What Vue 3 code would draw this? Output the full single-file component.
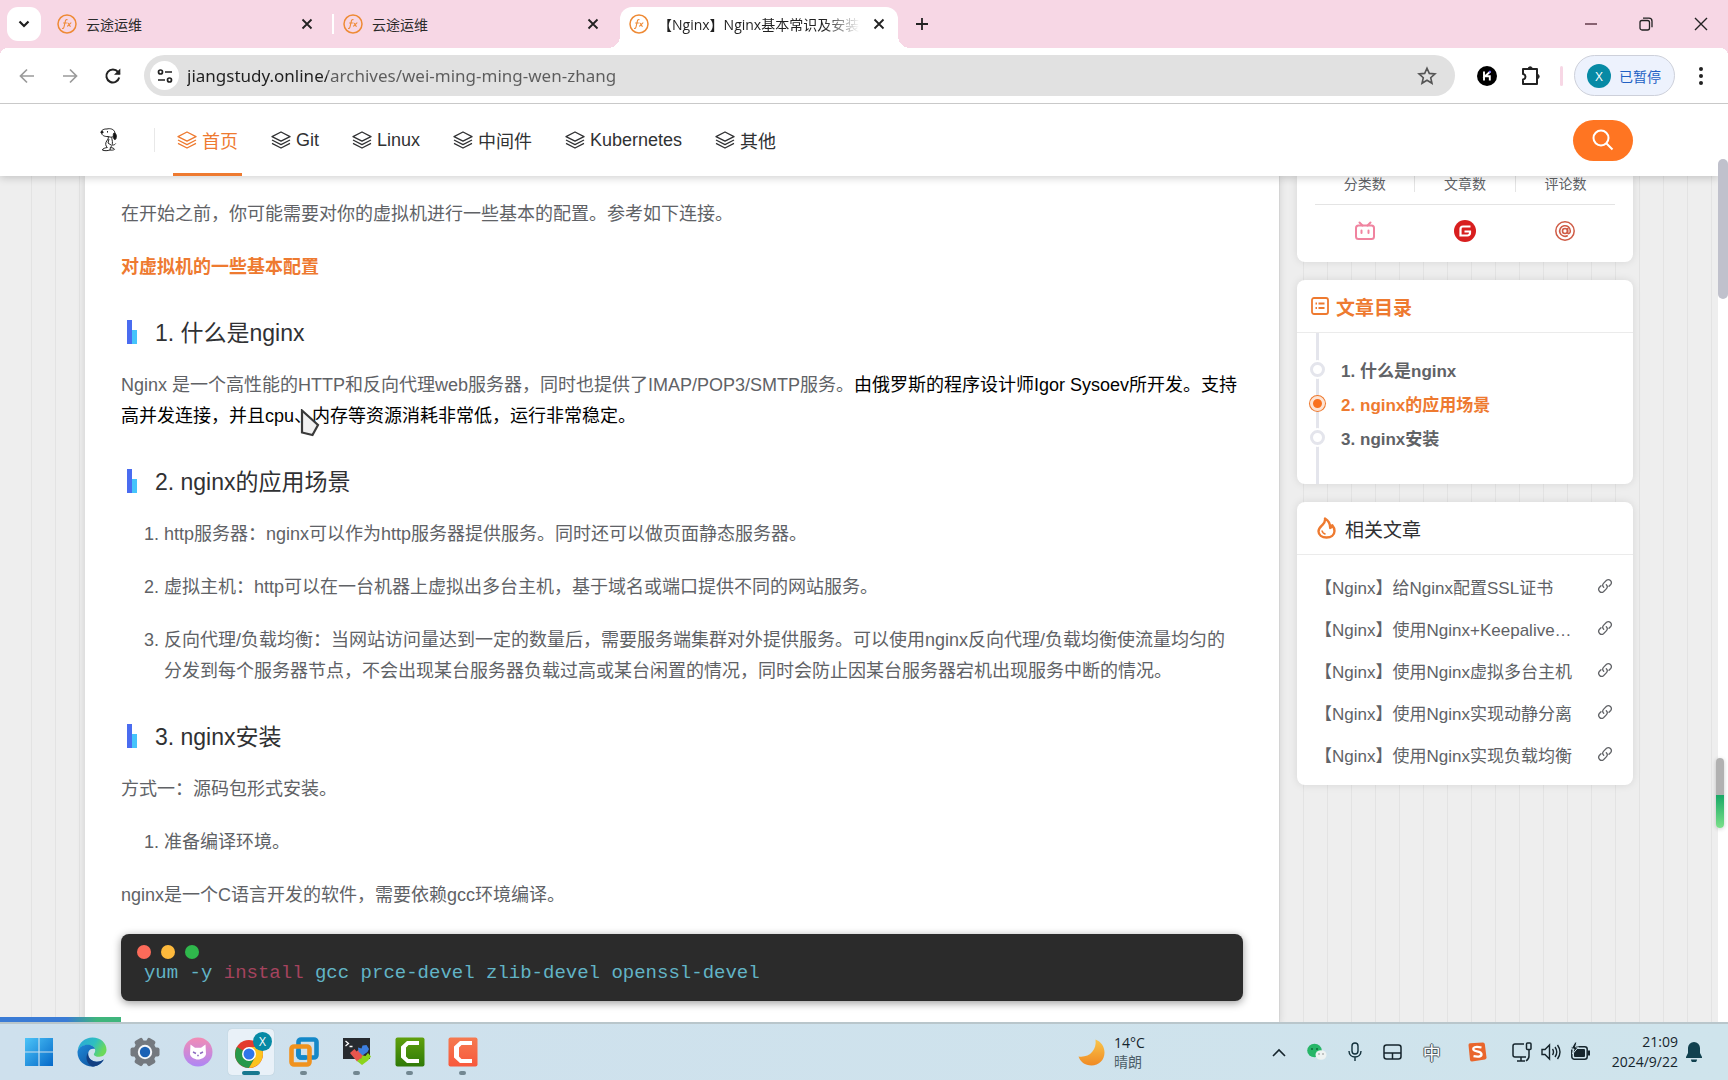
<template>
  <div class="screen">
    <!-- 标签栏 -->
    <div class="tabbar">
      <button class="tab-search" aria-label="搜索标签页">
        <svg width="12" height="8" viewBox="0 0 12 8"><path d="M1.5 1.5 6 6l4.500-4.500" fill="none" stroke="#1f1f1f" stroke-width="2.200" /></svg>
      </button>
      <div v-for="(t, i) in tabs" :key="i" :class="['tab', { active: t.active }]">
        <svg class="favicon" width="20" height="20" viewBox="0 0 20 20" fill="none" stroke="#ee8a35">
          <circle cx="10" cy="10" r="9" stroke-width="1.500" />
          <path d="M10.500 5.800c-1.500-.6-2 .4-2.300 2L7 13c-.3 1.300-.9 1.700-1.900 1.300M6.200 9h3.600M10.500 9c1.600-.4 1.300 3.600 3.400 3.300M14.300 8.900c-1.300-.2-2.500 3.300-4.300 3.400" stroke-width="1.100" />
        </svg>
        <span class="tab-title">{{ t.title }}</span>
        <button class="tab-close" aria-label="关闭">
          <svg width="12" height="12" viewBox="0 0 12 12"><path d="M1.500 1.500l9 9M10.500 1.500l-9 9" stroke="#222" stroke-width="1.800" /></svg>
        </button>
      </div>
      <button class="tab-new" aria-label="新标签页">
        <svg width="14" height="14" viewBox="0 0 14 14"><path d="M7 1v12M1 7h12" stroke="#222" stroke-width="1.800" /></svg>
      </button>
      <div class="win-controls">
        <button aria-label="最小化"><svg width="14" height="14" viewBox="0 0 14 14"><path d="M1 7h12" stroke="#6b4454" stroke-width="1.600" /></svg></button>
        <button aria-label="还原">
          <svg width="14" height="14" viewBox="0 0 14 14" fill="none" stroke="#222" stroke-width="1.300"><rect x="1" y="3.500" width="9.500" height="9.500" rx="2" /><path d="M4 1.200h6a3 3 0 0 1 3 3v6" /></svg>
        </button>
        <button aria-label="关闭窗口"><svg width="14" height="14" viewBox="0 0 14 14"><path d="M1 1l12 12M13 1L1 13" stroke="#222" stroke-width="1.400" /></svg></button>
      </div>
    </div>

    <!-- 地址栏 -->
    <div class="toolbar">
      <button class="tool" aria-label="后退"><svg width="16" height="16" viewBox="0 0 16 16" fill="none" stroke="#9a9a9a" stroke-width="1.700"><path d="M15 8H2M8 1.500 1.500 8 8 14.500" /></svg></button>
      <button class="tool" aria-label="前进"><svg width="16" height="16" viewBox="0 0 16 16" fill="none" stroke="#9a9a9a" stroke-width="1.700"><path d="M1 8h13M8 1.500 14.500 8 8 14.500" /></svg></button>
      <button class="tool" aria-label="刷新">
        <svg width="18" height="18" viewBox="0 0 18 18"><path d="M15.200 10.500A6.500 6.500 0 1 1 14 4.900L15.500 7" fill="none" stroke="#222" stroke-width="2" /><path d="M16.300 1.500v6.300H10z" fill="#222" /></svg>
      </button>
      <div class="omnibox">
        <button class="site-info" aria-label="网站信息">
          <svg width="16" height="16" viewBox="0 0 16 16" fill="none" stroke="#222" stroke-width="1.700"><circle cx="3.500" cy="4" r="2" /><path d="M8 4h7M1 12h7" /><circle cx="12.500" cy="12" r="2" /></svg>
        </button>
        <input v-model="url" class="url" aria-label="地址" spellcheck="false" />
        <button class="star" aria-label="收藏">
          <svg width="20" height="20" viewBox="0 0 20 20"><path d="M10 2.200l2.300 5.200 5.700.5-4.300 3.800 1.300 5.600-5-3-5 3 1.300-5.600L2 7.900l5.700-.5z" fill="none" stroke="#555" stroke-width="1.600" /></svg>
        </button>
      </div>
      <button class="ext" aria-label="扩展 K">
        <svg width="20" height="20" viewBox="0 0 20 20"><circle cx="10" cy="10" r="10" fill="#000" /><path d="M7 5.500v9M13.300 5.500 8 10.200h4.800v4.300" fill="none" stroke="#fff" stroke-width="1.900" /><path d="M12.300 6.400l1.300-1.200" stroke="#6a5cff" stroke-width="1.800" /></svg>
      </button>
      <button class="ext" aria-label="扩展程序">
        <svg width="22" height="22" viewBox="0 0 22 22" fill="none" stroke="#222" stroke-width="2"><path d="M3 14.500V19h14V4H3v5c3.300.4 3.300 5.100 0 5.500z" stroke-linejoin="round" /><path d="M8 4a2.200 2.200 0 0 1 4.400 0M17 9.300a2.200 2.200 0 0 1 0 4.400" fill="#222" stroke-width="1" /></svg>
      </button>
      <span class="tool-sep"></span>
      <button class="profile"><span class="avatar">X</span>已暂停</button>
      <button class="more" aria-label="更多"><svg width="4" height="18" viewBox="0 0 4 18" fill="#222"><circle cx="2" cy="2" r="2" /><circle cx="2" cy="9" r="2" /><circle cx="2" cy="16" r="2" /></svg></button>
    </div>

    <!-- 网页 -->
    <div class="page">
      <header class="site-header">
        <div class="wrap header-inner">
          <a href="#" class="logo" aria-label="云途运维">
            <svg width="18" height="24" viewBox="0 0 18 24" fill="none" stroke="#222" stroke-width="1">
              <path d="M1.500 4.500C1 2 4 .8 7 1c3-1 7 .2 7.800 3.200.4 2-.4 3.800-2.300 4.600-1.500.8-3.200 0-4.500-.3C5 8.800 1.500 7.500 1.500 4.500z" />
              <path d="M13.500 5.500c1-1.200 2.700 0 2.800 2.500.1 2-.4 3.700-1.500 3.600-1.300 0-1.800-4.400-1.300-6.100z" fill="#111" />
              <ellipse cx="2" cy="4.200" rx="1.200" ry=".9" fill="#111" />
              <path d="M7.500 3v1.600M8.300 9c.3 1.500-.6 2.600-1.600 4-1.500 2-1.300 5 .6 6.500M11.800 9.200c-.2 2 .8 3.300.6 6-.2 2-1 3.400-2 4.300M7.300 19.500c-2 .3-4.500 1-5 2.500 2 1 5.500.8 7.700 0l.4-2.500M9 11l-1 4 3 2M12.400 17c1.500.2 2.700-.5 3.300-1.500M10 22c1.500.3 3.500.2 4.500-.6-.5-1.200-2-1.600-4-1.900" />
            </svg>
          </a>
          <nav class="nav">
            <a v-for="(n, i) in navs" :key="n" href="#" :class="['nav-item', { active: i === 0 }]">
              <svg width="20" height="18" viewBox="0 0 20 18" fill="none" stroke="currentColor" stroke-width="1.300" stroke-linejoin="round">
                <path d="M10 1l9 4.600-9 4.600-9-4.600zM1 9l9 4.600L19 9M1 12.400 10 17l9-4.600" />
              </svg>
              {{ n }}
            </a>
          </nav>
          <button class="search" aria-label="搜索">
            <svg width="22" height="22" viewBox="0 0 22 22" fill="none" stroke="#fff" stroke-width="2"><circle cx="9" cy="9" r="7.500" /><path d="M14.500 14.500l6 6" /></svg>
          </button>
        </div>
      </header>

      <div class="body">
        <div class="wrap columns">
          <article class="article">
            <p>在开始之前，你可能需要对你的虚拟机进行一些基本的配置。参考如下连接。</p>
            <p><a href="#" class="link">对虚拟机的一些基本配置</a></p>
            <h2>1. 什么是nginx</h2>
            <p>Nginx 是一个高性能的HTTP和反向代理web服务器，同时也提供了IMAP/POP3/SMTP服务。<span class="dark">由俄罗斯的程序设计师Igor Sysoev所开发。支持高并发连接，并且cpu、内存等资源消耗非常低，运行非常稳定。</span></p>
            <h2>2. nginx的应用场景</h2>
            <ol>
              <li v-for="s in scenes" :key="s">{{ s }}</li>
            </ol>
            <h2>3. nginx安装</h2>
            <p>方式一：源码包形式安装。</p>
            <ol>
              <li>准备编译环境。</li>
            </ol>
            <p>nginx是一个C语言开发的软件，需要依赖gcc环境编译。</p>
            <div class="code">
              <div class="lights"><i class="red"></i><i class="yellow"></i><i class="green"></i></div>
              <pre><code>yum -y <span class="kw">install</span> gcc prce-devel zlib-devel openssl-devel</code></pre>
            </div>
          </article>

          <aside class="side">
            <section class="card stats">
              <div class="stat-row">
                <span>分类数</span>
                <span>文章数</span>
                <span>评论数</span>
              </div>
              <div class="social">
                <a href="#" aria-label="哔哩哔哩">
                  <svg width="20" height="20" viewBox="0 0 20 20" fill="none" stroke="#f0839f" stroke-width="2" stroke-linecap="round"><rect x="1" y="4.500" width="18" height="13.500" rx="2.500" /><path d="M4.500 1.500l3 3M15.500 1.500l-3 3M6.500 9.500v2.500M13.500 9.500v2.500" /></svg>
                </a>
                <a href="#" aria-label="Gitee">
                  <svg width="22" height="22" viewBox="0 0 22 22"><circle cx="11" cy="11" r="11" fill="#d81e1e" /><path d="M16.500 6.500H9A2.500 2.500 0 0 0 6.500 9v6.500h7a2.500 2.500 0 0 0 2.500-2.500v-1.500h-5.500" fill="none" stroke="#fff" stroke-width="2.200" /></svg>
                </a>
                <a href="#" aria-label="邮箱">
                  <svg width="20" height="20" viewBox="0 0 20 20" fill="none" stroke="#cf5b45"><circle cx="10" cy="10" r="9.200" stroke-width="1.500" /><circle cx="10" cy="10" r="2.500" stroke-width="1.600" /><path d="M12.600 7v4.300c0 2 2.700 1.700 2.700-1.300a5.300 5.300 0 1 0-2.500 4.500" stroke-width="1.600" /></svg>
                </a>
              </div>
            </section>

            <section class="card toc">
              <div class="card-head toc-head">
                <svg width="18" height="18" viewBox="0 0 18 18" fill="none" stroke="#ee7a30" stroke-width="1.800"><rect x="1" y="1" width="16" height="16" rx="2" /><path d="M4.500 6.500h1.500M7.500 6.500h6M4.500 11h1.500M7.500 11h6" /></svg>
                文章目录
              </div>
              <ul class="toc-list">
                <li v-for="(t, i) in toc" :key="t" :class="{ active: i === 1 }"><span class="dot"></span><a href="#">{{ t }}</a></li>
              </ul>
            </section>

            <section class="card related">
              <div class="card-head related-head">
                <svg width="19" height="22" viewBox="0 0 19 22" fill="none" stroke="#ee7a30" stroke-width="2.400" stroke-linejoin="round">
                  <path d="M8 1.500c.6 3-.8 4.600-2.500 6.300C3.400 9.900 1.500 11.500 1.500 14.200c0 3.800 3.500 6.300 8 6.300s8-2.500 8-6.500c0-2-.8-4.200-2.200-5.800-.2 1.200-.9 2.300-2.100 2.800C13.200 7 11.500 3.500 8 1.500z" />
                  <path d="M5 13.500c.3 2 1.700 3.200 3.500 3.600" stroke-width="1.600" />
                </svg>
                相关文章
              </div>
              <ul class="related-list">
                <li v-for="r in related" :key="r">
                  <a href="#">{{ r }}</a>
                  <svg width="16" height="16" viewBox="0 0 16 16" fill="none" stroke="#606266" stroke-width="1.300" stroke-linecap="round">
                    <path d="M6.700 9.300a3 3 0 0 1 0-4.200L9.500 2.300a3 3 0 0 1 4.200 4.200L12 8.200M9.300 6.700a3 3 0 0 1 0 4.200l-2.800 2.800a3 3 0 0 1-4.200-4.200L4 7.800" />
                  </svg>
                </li>
              </ul>
            </section>
          </aside>
        </div>
      </div>

      <div class="read-progress"></div>
      <div class="scrollbar"><div class="thumb"></div></div>
      <div class="level"></div>
    </div>

    <!-- 任务栏 -->
    <div class="taskbar">
      <div class="apps">
        <button class="app" aria-label="开始">
          <svg width="28" height="28" viewBox="0 0 28 28"><defs><linearGradient id="win" x1="0" y1="0" x2="1" y2="1"><stop offset="0" stop-color="#4cc4f8" /><stop offset="1" stop-color="#0568c8" /></linearGradient></defs><path d="M0 0h13.400v13.400H0zM14.600 0H28v13.400H14.600zM0 14.600h13.400V28H0zM14.600 14.600H28V28H14.600z" fill="url(#win)" /></svg>
        </button>
        <button class="app" aria-label="Edge">
          <svg width="30" height="30" viewBox="0 0 30 30">
            <defs>
              <linearGradient id="e1" x1="0" y1="0" x2="1" y2=".4"><stop offset="0" stop-color="#2aa6dc" /><stop offset=".6" stop-color="#2fbfc0" /><stop offset="1" stop-color="#6bd95a" /></linearGradient>
              <linearGradient id="e2" x1="0" y1="0" x2="1" y2="1"><stop offset="0" stop-color="#1e88d8" /><stop offset="1" stop-color="#0c4a94" /></linearGradient>
            </defs>
            <path d="M.8 13C2 5.500 8 .5 15.500.5 23.500.5 29.500 6 29.500 12.800c0 4.200-3.200 7-7.200 7-3.600 0-5.500-1.300-5.500-2.400 0-.9 1.400-1.400 1.400-3.800 0-3-2.800-5.600-7-5.600C6.500 8 2.700 10 .8 13z" fill="url(#e1)" />
            <path d="M.6 14C2 10.200 6 7.800 10.600 7.800c3.800 0 6.700 1.900 7.500 4.300-2-.9-5.800-.6-6.800 3.400-1.200 5 3.500 9.500 8.700 9.200 3.300-.2 5.200-1.500 6.800-2.300C24.600 26.800 20 29.500 15 29.500 7.500 29.500-.4 23.500.6 14z" fill="url(#e2)" />
            <path d="M11.300 15.500c-3 3.500-2.500 10.500 3.700 14 5-.1 9.300-2.900 11.800-7.100-1.600.8-3.500 2.100-6.800 2.300-5.200.3-9.900-4.200-8.700-9.200z" fill="#123f82" />
          </svg>
        </button>
        <button class="app" aria-label="设置">
          <svg width="30" height="30" viewBox="0 0 30 30"><g fill="#74797f"><circle cx="15" cy="15" r="11.500" /><rect v-for="a in 6" :key="a" x="10.500" y=".5" width="9" height="8" rx="2" :transform="`rotate(${a * 60 + 30} 15 15)`" /></g><circle cx="15" cy="15" r="7.200" fill="#f4f7fa" /><circle cx="15" cy="15" r="5.200" fill="#1b62b5" /></svg>
        </button>
        <button class="app" aria-label="Clash">
          <svg width="30" height="30" viewBox="0 0 30 30"><defs><linearGradient id="cat" x1="0" y1="0" x2="0" y2="1"><stop offset="0" stop-color="#f28cb4" /><stop offset="1" stop-color="#ae86f5" /></linearGradient></defs><circle cx="15" cy="15" r="14.500" fill="url(#cat)" /><path d="M7.500 7.500l4.500 3.300h6l4.500-3.300.5 9.500c-.3 3-4.500 5.500-8 5.500S7.300 20 7 17z" fill="#fff" /><path d="M10 15l3 1.500M20 15l-3 1.500M14.200 18.500h1.600" stroke="#8d6cc0" stroke-width="1.400" /></svg>
        </button>
        <button class="app current" aria-label="Chrome">
          <svg width="34" height="36" viewBox="0 0 34 36">
            <circle cx="15" cy="21" r="14" fill="#e33b2e" />
            <path d="M15 21 2.900 14A14 14 0 0 0 15 35l6.100-10.500z" fill="#27994a" />
            <path d="M15 21l6.100 3.500L15 35a14 14 0 0 0 12.100-21H15z" fill="#fcc31e" />
            <circle cx="15" cy="21" r="7" fill="#fff" /><circle cx="15" cy="21" r="5.500" fill="#2f76ea" />
          </svg>
          <span class="badge">X</span>
        </button>
        <button class="app open" aria-label="VMware">
          <svg width="30" height="30" viewBox="0 0 30 30" fill="none" stroke-width="4.600"><rect x="9.500" y="2.500" width="18" height="18" rx="2.500" stroke="#1488c8" /><rect x="2.500" y="9.500" width="18" height="18" rx="2.500" stroke="#f0921e" /><path d="M9.500 13v5a2.500 2.500 0 0 0 2.500 2.500h5" stroke="#1488c8" /></svg>
        </button>
        <button class="app open" aria-label="MobaXterm">
          <svg width="30" height="30" viewBox="0 0 30 30"><rect x="1" y="1" width="27" height="21" fill="#272b30" /><path d="M3.500 4l3 2.500-3 2.500M7.500 9.500h3" fill="none" stroke="#fff" stroke-width="1.300" /><path d="M8 16l4.500-4 2 2.500 2.500-2 5 7-7 5z" fill="#e8564e" /><path d="M16 10.500l3.500 1 1-3 4-.5 2.500 4-1.500 3-5 3.500-4-4z" fill="#3d7fe0" /><path d="M15 24l4.500-3 1-2.500 3 .5 2.500-3 3 3.500-3 4-6 4.500z" fill="#8bd41c" /></svg>
        </button>
        <button v-for="c in camtasia" :key="c.id" class="app open" :aria-label="c.name">
          <svg width="30" height="30" viewBox="0 0 30 30"><defs><linearGradient :id="c.id" x1="0" y1="0" x2="0" y2="1"><stop offset="0" :stop-color="c.from" /><stop offset="1" :stop-color="c.to" /></linearGradient></defs><rect x=".5" y=".5" width="29" height="29" rx="2" :fill="`url(#${c.id})`" /><path d="M24 4v4H13.500l-2.500 2.500v9l2.500 2.500H24v4H12l-6-5.500v-11L12 4z" fill="#fff" /></svg>
        </button>
      </div>

      <div class="weather">
        <svg width="27" height="27" viewBox="0 0 27 27"><defs><linearGradient id="moon" x1="0" y1="0" x2="0" y2="1"><stop offset="0" stop-color="#f9c54a" /><stop offset="1" stop-color="#f08a24" /></linearGradient></defs><path d="M17.500.5C23 2.500 26.500 7.500 26.500 13.500c0 7.500-5.500 13-13 13-6.500 0-11.500-4-13-9C11 19 19 11.500 17.500.5z" fill="url(#moon)" /></svg>
        <div class="weather-text">14°C<span>晴朗</span></div>
      </div>

      <div class="tray">
        <button aria-label="显示隐藏的图标"><svg width="14" height="9" viewBox="0 0 14 9"><path d="M1 8l6-6 6 6" fill="none" stroke="#16252c" stroke-width="1.600" /></svg></button>
        <button aria-label="微信">
          <svg width="20" height="18" viewBox="0 0 20 18"><ellipse cx="7.500" cy="7.500" rx="7.300" ry="6.800" fill="#27b668" /><circle cx="5" cy="6" r="1" fill="#10683a" /><circle cx="10" cy="6" r="1" fill="#10683a" /><ellipse cx="14" cy="12" rx="5.500" ry="4.800" fill="#eef3f2" /><circle cx="12" cy="11" r=".8" fill="#888" /><circle cx="16" cy="11" r=".8" fill="#888" /></svg>
        </button>
        <button aria-label="麦克风"><svg width="14" height="20" viewBox="0 0 14 20" fill="none" stroke="#12303b" stroke-width="1.400"><rect x="4" y="1" width="6" height="11" rx="3" /><path d="M1 9c0 8 12 8 12 0M7 15v4" /></svg></button>
        <button aria-label="触摸板"><svg width="19" height="16" viewBox="0 0 19 16" fill="none" stroke="#16252c" stroke-width="1.500"><rect x="1" y="1" width="17" height="14" rx="2.500" /><path d="M1 9h17M9.500 9v6" /></svg></button>
        <button class="ime">中</button>
        <button class="sogou" aria-label="搜狗输入法">
          <svg width="20" height="20" viewBox="0 0 20 20"><path d="M1.500 3Q1.500 1.500 3 1.300L16 .5Q17.500.5 17.800 2L19.500 15.500Q19.500 17 18 17.500L5 19.500Q3.500 19.500 3 18z" fill="#e9662c" /><path d="M14.500 5.500C8 4 5.500 5.500 6.500 7.800 7.500 10 14 8.500 14.500 12c.3 3-4 3-8 2.200" fill="none" stroke="#fff" stroke-width="2.300" /></svg>
        </button>
        <button class="system" aria-label="网络、音量、电池">
          <svg width="20" height="20" viewBox="0 0 20 20" fill="none" stroke="#16252c" stroke-width="1.500"><path d="M12 2H3a2 2 0 0 0-2 2v9a2 2 0 0 0 2 2h11M9 15v4M5 19h8M17 8v6q0 3-3 5" /><rect x="14.500" y="1" width="4.500" height="6.500" rx="1" /></svg>
          <svg width="20" height="18" viewBox="0 0 20 18" fill="none" stroke="#16252c" stroke-width="1.400"><path d="M1 6.500h3L8.500 2v14L4 11.500H1zM11.500 6q2 3 0 6M14 4q3.500 5 0 10M16.500 2q5 7 0 14" /></svg>
          <svg width="21" height="20" viewBox="0 0 21 20"><rect x="1.800" y="4.800" width="15.400" height="12.400" rx="2.500" fill="none" stroke="#16252c" stroke-width="1.500" /><rect x="4" y="7" width="11" height="8" rx="1" fill="#16252c" /><path d="M18 8.500h2v5h-2z" fill="#16252c" /><path d="M5 0 1 7h3L2.500 12 8.500 5H5.500L7 0z" fill="#16252c" stroke="#cfe4ec" stroke-width="1" /></svg>
        </button>
        <div class="clock">21:09<span>2024/9/22</span></div>
        <button aria-label="通知"><svg width="16" height="20" viewBox="0 0 16 20" fill="#11414f"><path d="M8 0a6 6 0 0 1 6 6v5l2 4v1H0v-1l2-4V6a6 6 0 0 1 6-6zM5 17.500h6a3 3 0 0 1-6 0z" /></svg></button>
      </div>
    </div>

    <svg class="cursor" width="20" height="28" viewBox="0 0 20 28"><path d="M2 1.500 18 16l-5.500 10L2 23.500z" fill="#f1f1f1" stroke="#3a3a3a" stroke-width="2.200" /></svg>
  </div>
</template>

<script setup>
import { ref } from 'vue'

const tabs = [
  { title: '云途运维' },
  { title: '云途运维' },
  { title: '【Nginx】Nginx基本常识及安装', active: true },
]
const url = ref('jiangstudy.online/archives/wei-ming-ming-wen-zhang')

const navs = ['首页', 'Git', 'Linux', '中间件', 'Kubernetes', '其他']

const scenes = [
  'http服务器：nginx可以作为http服务器提供服务。同时还可以做页面静态服务器。',
  '虚拟主机：http可以在一台机器上虚拟出多台主机，基于域名或端口提供不同的网站服务。',
  '反向代理/负载均衡：当网站访问量达到一定的数量后，需要服务端集群对外提供服务。可以使用nginx反向代理/负载均衡使流量均匀的分发到每个服务器节点，不会出现某台服务器负载过高或某台闲置的情况，同时会防止因某台服务器宕机出现服务中断的情况。',
]

const toc = ['1. 什么是nginx', '2. nginx的应用场景', '3. nginx安装']

const related = [
  '【Nginx】给Nginx配置SSL证书',
  '【Nginx】使用Nginx+Keepalive…',
  '【Nginx】使用Nginx虚拟多台主机',
  '【Nginx】使用Nginx实现动静分离',
  '【Nginx】使用Nginx实现负载均衡',
]

const camtasia = [
  { id: 'cam', name: 'Camtasia', from: '#5fa00c', to: '#2f7a08' },
  { id: 'rec', name: 'Camtasia Recorder', from: '#f57a50', to: '#f8583c' },
]
</script>

<style>
html, body { margin: 0; height: 100%; }
</style>

<style scoped>
.screen { position: relative; display: flex; flex-direction: column; height: 100vh; overflow: hidden; font-family: "Liberation Sans", "Noto Sans CJK SC", sans-serif; color: #303133; }
button { border: none; background: none; padding: 0; display: flex; align-items: center; justify-content: center; font-family: inherit; cursor: pointer; }
a { color: inherit; text-decoration: none; }
ul, ol { margin: 0; padding: 0; }
svg { flex: none; display: block; }

.tabbar, .toolbar, .taskbar { font-family: "Open Sans", "Noto Sans CJK SC", sans-serif; flex: none; }
.tabbar { display: flex; align-items: center; height: 48px; padding-left: 7px; background: #f7d7e5; }
.tab-search { width: 34px; height: 34px; border-radius: 11px; background: #fff; margin-right: 7px; }
.tab { position: relative; display: flex; align-items: center; gap: 9px; width: 286px; height: 34px; padding: 0 19px 0 9px; box-sizing: border-box; font-size: 14px; color: #2b2b2b; border-right: 2px solid transparent; }
.tab:nth-child(2) { border-right-color: #fff; height: 20px; }
.tab.active { width: 278px; height: 41px; align-self: flex-end; padding: 0 13px 7px 9px; border: none; background: #fff; border-radius: 12px 12px 0 0; color: #1f1f1f; }
.tab.active::before, .tab.active::after { content: ''; position: absolute; bottom: 0; width: 12px; height: 12px; }
.tab.active::before { left: -12px; background: radial-gradient(circle at 0 0, transparent 12px, #fff 12px); }
.tab.active::after { right: -12px; background: radial-gradient(circle at 100% 0, transparent 12px, #fff 12px); }
.tab-title { flex: 1; overflow: hidden; white-space: nowrap; }
.tab.active .tab-title { margin-right: 4px; -webkit-mask-image: linear-gradient(90deg, #000 82%, transparent); mask-image: linear-gradient(90deg, #000 82%, transparent); }
.tab-new { margin-left: 17px; }
.win-controls { margin-left: auto; display: flex; }
.win-controls button { width: 55px; height: 48px; }

.toolbar { display: flex; align-items: center; height: 55px; background: #fff; border-bottom: 1px solid #c9c9c9; padding: 0 18px 0 5px; position: relative; }
.toolbar::before { content: ''; position: absolute; inset: 0 0 auto; height: 8px; background: radial-gradient(circle at 8px 8px, transparent 8px, #f7d7e5 8px) 0 0 / 8px 8px no-repeat, radial-gradient(circle at 0 8px, transparent 8px, #f7d7e5 8px) 100% 0 / 8px 8px no-repeat; }
.tool { width: 43px; height: 40px; }
.omnibox { flex: 1; display: flex; align-items: center; height: 41px; margin-left: 10px; padding: 0 18px 0 6px; border-radius: 21px; background: #e1e1e1; }
.site-info { width: 29px; height: 29px; border-radius: 50%; background: #fff; flex: none; }
.url { flex: 1; min-width: 0; margin-left: 8px; padding: 0; border: none; outline: none; font: 17px/24px "Noto Sans", sans-serif; color: transparent; background: linear-gradient(90deg, #1f1f1f 140px, #5c5c5c 140px); -webkit-background-clip: text; background-clip: text; }
.ext { width: 22px; margin-left: 21px; }
.ext + .ext { margin-left: 22px; }
.tool-sep { width: 3px; height: 20px; margin: 0 11px 0 18px; border-radius: 2px; background: #f7d7e5; }
.profile { gap: 8px; height: 41px; padding: 0 13px 0 12px; border: 1px solid #cdd0da; border-radius: 21px; background: #edf2fd; color: #2160c4; font-size: 14px; }
.avatar { width: 24px; height: 24px; border-radius: 50%; background: #078aa5; color: #fff; font-size: 13px; line-height: 24px; text-align: center; }
.more { width: 20px; margin-left: 16px; margin-right: -1px; }

.page { position: relative; flex: 1; min-height: 0; display: flex; flex-direction: column; padding-right: 10px; background: #fff; }
.wrap { width: calc(90% + 2px); margin: 0 auto; }
.site-header { position: relative; z-index: 2; flex: none; background: #fff; box-shadow: 0 2px 8px rgba(0,0,0,.18); clip-path: inset(0 0 -12px 0); }
.header-inner { display: flex; align-items: center; height: 72px; }
.logo { padding: 0 36px 0 15px; border-right: 1px solid #e8e8e8; }
.nav { display: flex; gap: 25px; height: 72px; margin-left: 18px; }
.nav-item { display: flex; align-items: center; gap: 5px; padding: 0 4px; font-size: 18px; color: #303133; border-bottom: 3px solid transparent; border-top: 3px solid transparent; box-sizing: border-box; }
.nav-item.active { color: #ee7a30; border-bottom-color: #ee7a30; }
.search { width: 60px; height: 41px; margin-left: auto; border-radius: 21px; background: #ff7522; }

.body { flex: 1; min-height: 0; overflow: hidden; background: repeating-linear-gradient(90deg, transparent 0 23px, #e3e3e3 23px 24px) 8px 0, #eee; }
.columns { display: flex; gap: 18px; min-height: 100%; }
.article { flex: 1; min-width: 0; padding: 23px 36px; background: #fff; box-shadow: 0 0 8px rgba(0,0,0,.14); font-size: 18px; line-height: 31px; color: #606266; }
.article p, .article li { margin: 0 0 22px; }
.article ol { padding: 0 8px 0 43px; }
.article h2 { margin: 35px 0 21px; padding-left: 34px; font-size: 23px; font-weight: 400; line-height: 31px; color: #303133; background: linear-gradient(#45c4fb, #45c4fb) 11px 12px / 5px 14px no-repeat, linear-gradient(#4a6cf0, #4a6cf0) 6px 2px / 5px 24px no-repeat; }
.link { color: #ee7a30; font-weight: 700; }
.dark { color: #000; }
.code { margin-top: 23px; height: 67px; border-radius: 8px; background: #2b2b2b; box-shadow: 0 2px 8px rgba(0,0,0,.4); }
.lights { display: flex; gap: 10px; padding: 11px 16px 0; }
.lights i { width: 14px; height: 14px; border-radius: 50%; }
.lights .red { background: #fc6b5a; }
.lights .yellow { background: #fdb93c; }
.lights .green { background: #2fb84c; }
.code pre { margin: 0; padding: 0 23px; font: 19px/28px "Liberation Mono", monospace; color: #62b4c6; }
.code code { font: inherit; }
.kw { color: #a5435e; }

.side { width: 336px; flex: none; display: flex; flex-direction: column; gap: 18px; }
.card { background: #fff; border-radius: 8px; box-shadow: 0 0 8px rgba(0,0,0,.1); }
.stats { padding: 0 18px; border-radius: 0 0 8px 8px; }
.stat-row { display: flex; border-bottom: 1px solid #e4e4e4; padding-bottom: 12px; font-size: 14px; line-height: 16px; color: #606266; }
.stat-row span { flex: 1; text-align: center; }
.stat-row span + span { border-left: 1px solid #e4e4e4; }
.social { display: flex; height: 57px; }
.social a { flex: 1; display: flex; justify-content: center; align-items: center; padding-bottom: 5px; }
.card-head { display: flex; align-items: center; height: 52px; border-bottom: 1px solid #ebebeb; font-size: 19px; }
.toc-head { padding: 0 14px; gap: 7px; color: #ee7a30; font-weight: 700; }
.toc-list { list-style: none; padding: 19px 0 30px 13px; font-size: 17px; font-weight: 700; color: #606266; background: linear-gradient(#e4e5ec, #e4e5ec) 19px 0 / 3px 100% no-repeat; }
.toc-list li { display: flex; align-items: center; gap: 16px; height: 34px; }
.dot { width: 9px; height: 9px; border: 3px solid #e4e5ec; border-radius: 50%; background: #fff; box-shadow: 0 0 0 2px #fff; }
.toc-list .active { color: #ee7a30; }
.active .dot { border-color: #fde3d3; background: #f9711f; box-shadow: 0 0 0 1px #ee7a30; }
.related-head { padding: 0 20px; gap: 9px; }
.related-list { list-style: none; padding: 10px 20px 10px 18px; font-size: 17px; color: #606266; }
.related-list li { display: flex; align-items: center; justify-content: space-between; height: 42px; white-space: nowrap; }

.read-progress { position: absolute; left: 0; bottom: 0; width: 7%; height: 5px; background: linear-gradient(90deg, #3a7bd5 55%, #3fb57c 80%); }
.scrollbar { position: absolute; top: 0; right: 0; bottom: 0; width: 10px; background: #fff; z-index: 3; }
.thumb { height: 140px; margin-top: 55px; border-radius: 5px; background: #c0c1cc; }
.level { position: absolute; right: 4px; bottom: 194px; z-index: 4; width: 8px; height: 70px; border-radius: 4px; background: linear-gradient(#b1b1b1 37px, #18a866 37px, #7be08a); box-shadow: 0 1px 4px rgba(0,0,0,.2); }

.taskbar { position: relative; display: flex; align-items: center; justify-content: space-between; height: 58px; box-sizing: border-box; border-top: 2px solid #b9c6cb; background: linear-gradient(90deg, #cee0ed, #cfe4ec); font-size: 14px; color: #16252c; }
.apps { display: flex; gap: 7px; padding-left: 16px; }
.app { position: relative; width: 46px; height: 46px; border-radius: 4px; }
.app.current { background: #e9f1f8; box-shadow: 0 0 1px #9fb4c0; }
.app.current svg { margin-top: -3px; }
.app.open::after, .app.current::after { content: ''; position: absolute; bottom: 0; left: 50%; width: 7px; height: 4px; margin-left: -4px; border-radius: 2px; background: #728791; }
.app.current::after { width: 18px; margin-left: -9px; background: #17788f; }
.badge { position: absolute; top: 3px; right: 2px; width: 19px; height: 19px; border-radius: 50%; background: #078aa5; color: #fff; font-size: 12px; line-height: 19px; text-align: center; }
.weather { position: absolute; left: 1078px; display: flex; align-items: center; gap: 9px; line-height: 19px; }
.weather-text span, .clock span { display: block; }
.weather-text span { color: #4c5e68; }
.tray { display: flex; align-items: center; gap: 21px; padding-right: 26px; }
.ime { font-size: 18px; color: #fff; text-shadow: 1px 0 #4a565c, -1px 0 #4a565c, 0 1px #4a565c, 0 -1px #4a565c; }
.sogou { margin-left: 5px; }
.system { gap: 9px; margin-left: 4px; }
.clock { text-align: right; line-height: 20px; margin-right: -13px; }

.cursor { position: absolute; left: 300px; top: 409px; z-index: 9; }
</style>
